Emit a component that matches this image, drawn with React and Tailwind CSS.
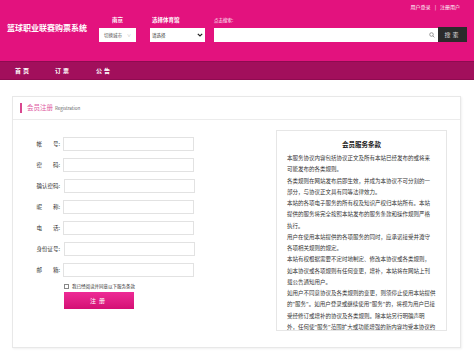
import React from "react";

const fields = [
  { label: "帐\u3000\u3000号:", shift: false },
  { label: "密\u3000\u3000码:", shift: false },
  { label: "确认密码:", shift: true },
  { label: "昵\u3000\u3000称:", shift: false },
  { label: "电\u3000\u3000话:", shift: false },
  { label: "身份证号:", shift: true },
  { label: "邮\u3000\u3000箱:", shift: false },
];

const terms = [
  "本服务协议内容包括协议正文及所有本站已经发布的或将来",
  "可能发布的各类规则。",
  "各类规则在网站发布后即生效，并成为本协议不可分割的一",
  "部分，与协议正文具有同等法律效力。",
  "本站的各项电子服务的所有权及知识产权归本站所有。本站",
  "提供的服务将完全按照本站发布的服务条款和操作规则严格",
  "执行。",
  "用户在使用本站提供的各项服务的同时，应承诺接受并遵守",
  "各项相关规则的规定。",
  "本站有权根据需要不定时地制定、修改本协议或各类规则，",
  "如本协议或各项规则有任何变更，增补，本站将在网站上刊",
  "载公告通知用户。",
  "如用户不同意协议及各类规则的变更，则须停止使用本站提供",
  "的\"服务\"。如用户登录或继续使用\"服务\"的，将视为用户已接",
  "受经修订或增补的协议及各类规则。除本站另行明确声明",
  "外，任何使\"服务\"范围扩大或功能增强的新内容均受本协议约",
];

const Header = () => (
  <header className="h-[61px] bg-[#e3127e] px-[7px] pt-[3px] text-white">
    <div className="flex justify-end pr-[7px] text-[5px] leading-[7px]">
      <span>用户登录</span>
      <span className="mx-[4px]">|</span>
      <span>注册用户</span>
    </div>
    <div className="mt-[7px] flex items-start">
      <div className="mt-[6px] w-[93px] text-[8px] font-bold leading-[10px]">篮球职业联赛购票系统</div>
      <div className="flex w-[37px] flex-col items-center">
        <div className="text-[5.5px] font-bold leading-[7px]">南京</div>
        <div className="mt-[4px] flex h-[14px] w-[37px] items-center justify-between bg-white px-[5px] text-[4.5px] text-[#555]">
          <span>切换城市</span>
          <span className="text-[4px] text-[#999]">∨</span>
        </div>
      </div>
      <div className="ml-[14px] flex w-[55px] flex-col">
        <div className="pl-[2px] text-[5.5px] font-bold leading-[7px]">选择体育馆</div>
        <div className="mt-[4px] flex h-[14px] w-[55px] items-center justify-between bg-white px-[2px] text-[4.5px] text-[#333]">
          <span>请选择</span>
          <svg width="6" height="4" viewBox="0 0 6 4">
            <path d="M0.8 0.8 L3 3 L5.2 0.8" fill="none" stroke="#222" strokeWidth="1.2" />
          </svg>
        </div>
      </div>
      <div className="ml-[9px] flex flex-col">
        <div className="text-[4.5px] leading-[7px]">点击搜索:</div>
        <div className="mt-[3px] flex items-center">
          <div className="flex h-[14px] w-[224px] items-center justify-end bg-white pr-[3px]">
            <svg width="6" height="6" viewBox="0 0 10 10">
              <circle cx="4.2" cy="4.2" r="3" fill="none" stroke="#888" strokeWidth="1.4" />
              <path d="M6.4 6.4 L9 9" stroke="#888" strokeWidth="1.4" />
            </svg>
          </div>
          <div className="flex h-[15px] w-[29px] items-center justify-center bg-[#2b2b2b] text-[6px] tracking-[2px] text-[#ddd]">搜索</div>
        </div>
      </div>
    </div>
  </header>
);

const Nav = () => (
  <nav className="flex h-[19px] items-center border-y border-[#8e0b50] bg-[#a20f5c] pl-[15px] text-[6px] font-bold tracking-[2px] text-white">
    <span className="w-[40px]">首页</span>
    <span className="w-[41px]">订票</span>
    <span>公告</span>
  </nav>
);

const Form = () => (
  <div className="w-[263px] pt-[17px]">
    {fields.map((f) => (
      <div key={f.label} className="mb-[7px] flex h-[14px] items-center">
        <div className="w-[50px] pr-[3px] text-right text-[5.5px] text-[#333]">{f.label}</div>
        <div className={"h-[14px] w-[131px] border border-[#e2e2e2] bg-white " + (f.shift ? "ml-[1px]" : "")}></div>
      </div>
    ))}
    <div className="-mt-[1px] ml-[51px] flex items-center">
      <div className="h-[5px] w-[5px] border border-[#888] bg-white"></div>
      <span className="ml-[3px] text-[4.5px] leading-[7px] text-[#333]">我已经阅读并同意以下服务条款</span>
    </div>
    <button className="mt-[2px] ml-[51px] flex h-[17px] w-[70px] items-center justify-center bg-gradient-to-b from-[#ee2a96] to-[#d40f74] text-[6px] tracking-[3px] text-white">
      注册
    </button>
  </div>
);

const Terms = () => (
  <div className="mt-[10px] h-[201px] w-[171px] overflow-hidden border border-[#e6e6e6] bg-white px-[10px] pt-[9px]">
    <div className="text-center text-[6.5px] font-bold leading-[9px] text-[#222]">会员服务条款</div>
    <div className="mt-[4px] text-[5.5px] leading-[11.25px] text-[#333]">
      {terms.map((t, i) => (
        <div key={i} className="whitespace-nowrap">{t}</div>
      ))}
    </div>
  </div>
);

export default function App() {
  return (
    <div className="h-[358px] w-[474px] overflow-hidden bg-white font-['Noto_Sans_CJK_SC',sans-serif]">
      <Header />
      <Nav />
      <div className="px-[12px] pt-[16px]">
        <div className="h-[252px] w-[449px] border border-[#e8e8e8] bg-white shadow-[1px_1px_2px_rgba(0,0,0,0.06)]">
          <div className="flex h-[23px] items-center border-b border-[#ececec] pl-[7px]">
            <div className="h-[10px] w-[2px] bg-[#d9478f]"></div>
            <span className="ml-[5px] text-[6.5px] text-[#e05a9f]">会员注册</span>
            <span className="ml-[2px] text-[4.5px] text-[#666]">Registration</span>
          </div>
          <div className="flex">
            <Form />
            <Terms />
          </div>
        </div>
      </div>
    </div>
  );
}
